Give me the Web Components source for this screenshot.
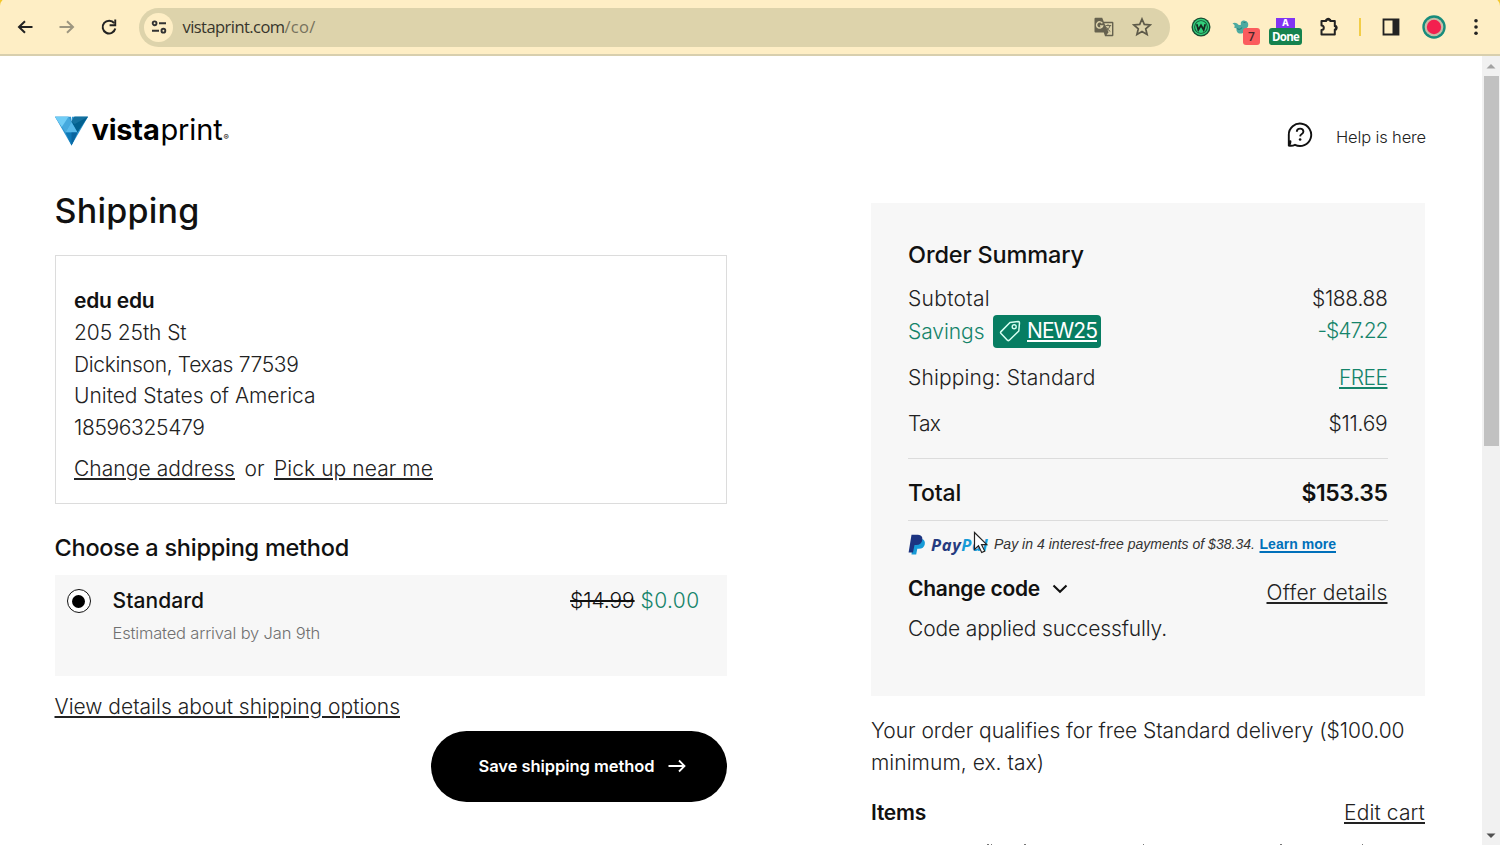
<!DOCTYPE html>
<html lang="en">
<head>
<meta charset="utf-8">
<title>Shipping</title>
<style>
  body {
    margin: 0;
    height: 845px;
    overflow: hidden;
    background: #fff;
    color: #222;
    font: 300 21px/32px Inter, "Liberation Sans", sans-serif;
  }
</style>
</head>
<body>

<checkout-page></checkout-page>

<script>
// Text that spreads its letters to take up the given width
class FitText extends HTMLElement {

  constructor() {
    super();

    const shadowRoot = this.attachShadow({mode: 'open'});

    shadowRoot.innerHTML = `
      <style>
        :host { display: inline-block; white-space: nowrap; }
        :host([u]) span {
          text-decoration: underline;
          text-decoration-thickness: var(--line, 1.5px);
          text-underline-offset: 2px;
        }
        span { display: inline-block; }
      </style>
      <span><slot></slot></span>
    `;
  }

  connectedCallback() {
    const span = this.shadowRoot.querySelector('span');
    const width = parseFloat(this.getAttribute('w'));
    const natural = span.getBoundingClientRect().width;

    span.style.letterSpacing = `${(width - natural) / this.textContent.length}px`;
    this.style.width = `${width}px`;
  }

}

const icons = {
  back: [18, 18, '<path d="M16.500 9H3M9 3.200 3 9l6 5.800" fill="none" stroke="#222" stroke-width="2"/>'],
  forward: [18, 18, '<path d="M1.500 9h13M9 3.200l6 5.800-6 5.800" fill="none" stroke="#9d9680" stroke-width="2"/>'],
  reload: [18, 18, '<path d="M14.2 5.2A6.4 6.4 0 1 0 15.3 10.6" fill="none" stroke="#222" stroke-width="2"/><path d="M16.2 1.6v6.6H9.6V6.3h4.7V1.6z" fill="#222"/>'],
  tune: [16, 16, '<g fill="none" stroke="#333" stroke-width="1.9"><circle cx="3.6" cy="4.3" r="1.9"/><path d="M8 4.3h7M1 11.7h7"/><circle cx="12.4" cy="11.7" r="1.9"/></g>'],
  translate: [20, 20, '<path d="M1.500.8h6.700l1.600 4h8.600q1 0 1 1v12.400q0 1-1 1H11l-1.200-3.700H1.500q-1 0-1-1V1.800q0-1 1-1z" fill="#66624f"/><path d="M10.300 6.200h7.700v11.600h-5.400l2-2.500z" fill="#ddd3ab"/><path d="M8.300 6.300A3.100 3.100 0 1 0 8.600 9H6" fill="none" stroke="#ddd3ab" stroke-width="1.500"/><path d="M11.500 8.600h5.700M14 7.300v1.300M16 8.800q-.8 3-3.600 5M12.500 10.200q1.200 2.600 3.800 4.300" fill="none" stroke="#66624f"/>'],
  star: [20, 20, '<path d="m10 2 2.300 5.400 5.900.5-4.500 3.900 1.400 5.700L10 14.500l-5.100 3 1.400-5.700-4.500-3.900 5.900-.5z" fill="none" stroke="#5e5a49" stroke-width="1.700"/>'],
  wave: [20, 20, '<circle cx="10" cy="10" r="9.500" fill="#174b31"/><circle cx="10" cy="10" r="7.500" fill="none" stroke="#32cf7c" stroke-width="1.300"/><circle cx="10" cy="10" r="5.900" fill="#32cf7c"/><path d="m5.800 7.300 1.500 5.700L10 8.300l2.700 4.700 1.500-5.700" fill="none" stroke="#15281f" stroke-width="1.800"/>'],
  bird: [18, 18, '<path d="M.5 4.200Q3 3 5.200 4.500 7 7 9 5.500 8 2.500 11 1.500q4-.5 5 2.500 1 4-2 5.500-1 4-4 5H7q-3-1.500-2.500-5L2 8.500q1-1 .5-2.500z" fill="#4daaa0"/><path d="M5 9.500q3 2 5-1M11.500 3.500h2" stroke="#2c837c" stroke-width="1.200" fill="none"/>'],
  puzzle: [22, 22, '<path d="M3.500 5h4.700V3.800h4V5h4.600v5.200h1.300v3.200h-1.300v5.100H3.500v-4.400q2.300-.1 2.300-2.300T3.500 9.500z" fill="none" stroke="#222" stroke-width="2" stroke-linejoin="round"/><path d="M8 4a2.200 2.200 0 0 1 4.400 0zM17.500 9.500a2.200 2.200 0 0 1 0 4.400z" fill="#222"/>'],
  panel: [18, 18, '<path d="M1.500 1.500h15v15h-15z" fill="none" stroke="#222" stroke-width="1.800"/><path d="M10.500 1h6.500v16h-6.500z" fill="#222"/>'],
  profile: [24, 24, '<circle cx="12" cy="12" r="11.700" fill="#178c7c"/><circle cx="12" cy="12" r="9.300" fill="#c6bda7"/><circle cx="12" cy="12" r="7.200" fill="#f3204f"/>'],
  dots: [6, 18, '<g fill="#222"><circle cx="3" cy="2.800" r="1.800"/><circle cx="3" cy="9" r="1.800"/><circle cx="3" cy="15.200" r="1.800"/></g>'],
  vista: [33, 30, '<path d="M0 .7h16L16.500 6 17 .7h16L16.500 29.500z" fill="#2f95cf"/><path d="M0 .7h13.500L16.500 6 10.500 16.500z" fill="#45a9de"/><path d="M0 .7h13.500L6.800 11z" fill="#70cdf6"/><path d="M19.500.7H33L22.500 16.500 16.500 6z" fill="#02608f"/><path d="M19.500.7H33L19.800 8 16.500 6z" fill="#14719f"/><path d="M16.500 6 22.500 16.500h-12z" fill="#58b9ea"/><path d="M10.500 16.500h12l-6 13z" fill="#0e79b6"/><path d="M16.500 16.500h6l-6 13z" fill="#0a659f"/>'],
  help: [26, 26, '<path d="M1.800 23.600V12.800A11.200 11.200 0 1 1 8 22.800q-2.800 1.500-6.200.8 1.900-1.500 1.600-4.400" fill="none" stroke="#111" stroke-width="1.900" stroke-linecap="round" stroke-linejoin="round"/><path d="M9.800 9.800q.1-3.200 3.300-3.200t3.300 2.900q0 1.500-1.600 2.500t-1.700 2.400" fill="none" stroke="#111" stroke-width="1.900"/><circle cx="13.100" cy="17.500" r="1.300" fill="#111"/>'],
  tag: [22, 22, '<path d="M11 2.500 19.300 1.500q1.200 0 1.200 1.200L19.800 11 10.300 20.200q-1 .8-1.900 0L2 13.600q-.9-1 0-2z" fill="none" stroke="#d6fff2" stroke-width="1.500" stroke-linejoin="round"/><circle cx="15.200" cy="6.800" r="2" fill="none" stroke="#d6fff2" stroke-width="1.400"/>'],
  chevron: [16, 10, '<path d="m1.500 1.500 6.500 6.300 6.500-6.300" fill="none" stroke="#111" stroke-width="2.100"/>'],
  arrow: [18, 14, '<path d="M.5 7h15.800M11 1.500 16.500 7 11 12.500" fill="none" stroke="#fff" stroke-width="1.800"/>'],
  paypal: [18, 21, '<path d="M5 5h8.500q4 .8 3.300 5.200-1 4.600-6 4.600H9.300L8.200 20.500H3.500z" fill="#179bd7"/><path d="M3.500.8H10q5 .5 4.300 5.100-.9 5.100-6.200 5.100H6.500L5 18.500H.6z" fill="#1c3481"/>'],
  cursor: [16, 24, '<path d="M1.500 1.500v17l4-3.700 3.200 6.700 3-1.400-3.200-6.500h5.300z" fill="#fff" stroke="#222" stroke-width="1.200"/>'],
  up: [10, 6, '<path d="M.5 5.500 5 1l4.500 4.500z" fill="#a3a3a3"/>'],
  down: [10, 6, '<path d="M.5.500 5 5 9.500.500z" fill="#505050"/>']
};

class UiIcon extends HTMLElement {

  constructor() {
    super();

    const [width, height, shapes] = icons[this.getAttribute('name')];

    this.attachShadow({mode: 'open'}).innerHTML = `
      <style>
        :host { display: inline-flex; flex: none; }
      </style>
      <svg width="${width}" height="${height}" viewBox="0 0 ${width} ${height}">${shapes}</svg>
    `;
  }

}

class BrowserBar extends HTMLElement {

  constructor() {
    super();

    this.attachShadow({mode: 'open'}).innerHTML = `
      <style>
        :host { display: block; height: 56px; background: #f3c72b; overflow: hidden; }
        .bar {
          display: flex; align-items: center; box-sizing: border-box; height: 58px; margin-top: -2px;
          padding: 2px 3px 0; background: #feeec5; border-bottom: 2px solid #d8cfae;
          border-radius: 8px 8px 0 0;
        }
        .cell { display: flex; justify-content: center; align-items: center; flex: none; }
        .url {
          display: flex; align-items: center; flex: none; box-sizing: border-box; width: 1031px; height: 39px;
          margin-left: 8px; padding: 0 18px 0 5px; border-radius: 20px; background: #ddd3ab;
          font: 400 16.500px/22px "Open Sans", sans-serif; color: #37352c;
        }
        .site { width: 29px; height: 29px; border-radius: 50%; background: #feeec5; margin-right: 9.500px; }
        .path { color: #77725d; }
        .url ui-icon + ui-icon { margin-left: 18px; }
        .grow { flex: 1; }
        .ext { position: relative; height: 39px; }
        .ext ui-icon { align-self: flex-start; margin: 11px 14px 0 0; }
        .badge {
          position: absolute; border-radius: 3px; text-align: center;
          font: 700 11px/16px "Open Sans", sans-serif;
        }
        .red { left: 11px; top: 20px; width: 17px; height: 17px; background: #fb5c5e; color: #47262b; font-size: 12px; font-weight: 600; line-height: 17px; }
        .purple { position: absolute; left: 12px; top: 10px; width: 19px; height: 10px; background: #8134f3; color: #fff; text-align: center; font: 800 9px/10px Inter, sans-serif; }
        .green { left: 5px; top: 20px; width: 33px; height: 17px; background: #15824e; color: #fff; font-size: 11.500px; line-height: 17px; }
        .rule { width: 2px; height: 18px; background: #f2cd47; }
      </style>
      <div class="bar">
        <div class="cell" style="width: 43px"><ui-icon name="back"></ui-icon></div>
        <div class="cell" style="width: 41px"><ui-icon name="forward"></ui-icon></div>
        <div class="cell" style="width: 44px"><ui-icon name="reload"></ui-icon></div>
        <div class="url">
          <div class="cell site"><ui-icon name="tune"></ui-icon></div>
          <fit-text w="102">vistaprint.com</fit-text><fit-text class="path" w="31">/co/</fit-text>
          <div class="grow"></div>
          <ui-icon name="translate"></ui-icon>
          <ui-icon name="star"></ui-icon>
        </div>
        <div class="cell" style="width: 62px"><ui-icon name="wave"></ui-icon></div>
        <div class="cell ext" style="width: 32px"><ui-icon name="bird"></ui-icon><div class="badge red">7</div></div>
        <div class="cell ext" style="width: 43px"><div class="purple">A</div><div class="badge green"><fit-text w="27">Done</fit-text></div></div>
        <div class="cell" style="width: 44px"><ui-icon name="puzzle"></ui-icon></div>
        <div class="cell" style="width: 18px"><div class="rule"></div></div>
        <div class="cell" style="width: 44px"><ui-icon name="panel"></ui-icon></div>
        <div class="cell" style="width: 41px"><ui-icon name="profile"></ui-icon></div>
        <div class="cell" style="width: 43px"><ui-icon name="dots"></ui-icon></div>
      </div>
    `;
  }

}

class ScrollBar extends HTMLElement {

  constructor() {
    super();

    this.attachShadow({mode: 'open'}).innerHTML = `
      <style>
        :host {
          display: flex; flex-direction: column; align-items: center; flex: none; box-sizing: border-box;
          width: 18px; padding: 7px 0 6px; background: #f1f1f1;
        }
        .thumb { width: 15px; height: 370px; margin: 7px 0 auto 1px; background: #c1c1c1; }
      </style>
      <ui-icon name="up"></ui-icon>
      <div class="thumb"></div>
      <ui-icon name="down"></ui-icon>
    `;
  }

}

class VistaLogo extends HTMLElement {

  constructor() {
    super();

    this.attachShadow({mode: 'open'}).innerHTML = `
      <style>
        :host { display: flex; align-items: flex-start; height: 32px; color: #000; font-size: 29px; line-height: 28px; }
        .bold { font-weight: 700; margin-left: 4px; }
        .thin { font-weight: 400; margin-left: 1px; }
        .mark { font-size: 8px; font-weight: 400; line-height: 10px; margin: 16px 0 0 1px; }
      </style>
      <ui-icon name="vista"></ui-icon>
      <fit-text class="bold" w="68">vista</fit-text>
      <fit-text class="thin" w="62">print</fit-text>
      <span class="mark">®</span>
    `;
  }

}

class AddressCard extends HTMLElement {

  constructor() {
    super();

    this.attachShadow({mode: 'open'}).innerHTML = `
      <style>
        :host { display: block; box-sizing: border-box; width: 672px; height: 249px; padding: 29px 19px 0 18.500px; border: 1px solid #dcdcdc; }
        .line { height: 31.800px; line-height: 32px; }
        .name { font-weight: 600; color: #111; }
        .links { display: flex; margin-top: 9.500px; gap: 9.500px; }
      </style>
      <div class="line name"><fit-text w="80.500">edu edu</fit-text></div>
      <div class="line"><fit-text w="112.500">205 25th St</fit-text></div>
      <div class="line"><fit-text w="224.500">Dickinson, Texas 77539</fit-text></div>
      <div class="line"><fit-text w="241.500">United States of America</fit-text></div>
      <div class="line"><fit-text w="130.500">18596325479</fit-text></div>
      <div class="line links"><fit-text u w="161">Change address</fit-text><fit-text w="20">or</fit-text><fit-text u w="159">Pick up near me</fit-text></div>
    `;
  }

}

class ShippingMethod extends HTMLElement {

  constructor() {
    super();

    this.attachShadow({mode: 'open'}).innerHTML = `
      <style>
        :host { display: flex; box-sizing: border-box; width: 672px; height: 101px; padding: 10px 27px 0 12px; background: #f7f7f7; }
        .radio {
          display: grid; place-items: center; box-sizing: border-box; width: 24px; height: 24px; margin: 4px 22px 0 0;
          border: 1.500px solid #111; border-radius: 50%; background: #fff;
        }
        .radio::after { content: ""; width: 13px; height: 13px; border-radius: 50%; background: #000; }
        .text { flex: 1; }
        .title { font-weight: 500; color: #111; }
        .note { font-size: 16.500px; line-height: 33px; color: #707070; font-weight: 350; }
        .old { color: #111; text-decoration: line-through; text-decoration-thickness: 1.500px; }
        .new { color: #15846a; }
      </style>
      <div class="radio"></div>
      <div class="text">
        <div class="title"><fit-text w="91.500">Standard</fit-text></div>
        <div class="note"><fit-text w="207.500">Estimated arrival by Jan 9th</fit-text></div>
      </div>
      <div><fit-text w="64.500"><s class="old">$14.99</s></fit-text> <fit-text class="new" w="59">$0.00</fit-text></div>
    `;
  }

}

class SaveButton extends HTMLElement {

  constructor() {
    super();

    this.attachShadow({mode: 'open'}).innerHTML = `
      <style>
        :host {
          display: flex; align-items: center; justify-content: center; gap: 13px; box-sizing: border-box;
          width: 296px; height: 70.500px; padding-left: 7px; border-radius: 36px; background: #000; color: #fff;
          font-weight: 600; font-size: 16.500px;
        }
      </style>
      <slot></slot>
      <ui-icon name="arrow"></ui-icon>
    `;
  }

}

class SummaryRow extends HTMLElement {

  constructor() {
    super();

    this.attachShadow({mode: 'open'}).innerHTML = `
      <style>
        :host { display: flex; justify-content: space-between; align-items: center; }
        .label { display: flex; align-items: center; }
      </style>
      <div class="label"><slot></slot></div>
      <slot name="amount"></slot>
    `;
  }

}

class OrderSummary extends HTMLElement {

  constructor() {
    super();

    this.attachShadow({mode: 'open'}).innerHTML = `
      <style>
        :host { display: block; box-sizing: border-box; width: 554px; height: 493px; padding: 36px 37.500px 0 37px; background: #f7f7f7; }
        h2 { margin: 0; font-size: 23.500px; font-weight: 500; line-height: 32px; color: #111; }
        .subtotal { height: 32px; margin-top: 12px; }
        .savings { height: 32px; color: #15846a; }
        .savings > fit-text:first-child { margin-top: 2px; }
        .coupon {
          display: flex; align-items: center; box-sizing: border-box; width: 108px; height: 33px; margin-left: 8.500px;
          padding-left: 6px; border-radius: 4px; background: #077d62; color: #fff; font-weight: 400;
        }
        .coupon ui-icon { margin-right: 6px; }
        .shipping { height: 32px; margin-top: 14.500px; }
        .free { color: #15846a; }
        .tax { height: 32px; margin-top: 14px; }
        .total { height: 63px; margin-top: 18.500px; padding-top: 6px; box-sizing: border-box; border: solid #dcdcdc; border-width: 1px 0; font-weight: 600; font-size: 23px; color: #111; }
        .paypal { position: relative; display: flex; align-items: center; height: 46px; color: #333; font: italic 400 14px/20px "Liberation Sans", sans-serif; }
        .brand { margin: 2px 6px 0 5px; color: #253b80; font: italic 700 16.500px/20px "Open Sans", sans-serif; }
        .brand b { color: #179bd7; font-weight: 700; }
        .learn { margin-left: 4.500px; color: #0070ba; font-style: normal; font-weight: 700; }
        .paypal .pointer { position: absolute; left: 65px; top: 10px; }
        .code { height: 32px; margin-top: 7px; }
        .change { font-weight: 600; color: #111; margin-top: -3px; }
        .offer { margin-top: 5px; }
        .chevron { margin: -3px 0 0 12px; }
        .applied { margin-top: 7px; }
      </style>
      <h2><fit-text w="176">Order Summary</fit-text></h2>
      <summary-row class="subtotal"><fit-text w="82">Subtotal</fit-text><fit-text slot="amount" w="75.500">$188.88</fit-text></summary-row>
      <summary-row class="savings">
        <fit-text w="76.500">Savings</fit-text>
        <div class="coupon"><ui-icon name="tag"></ui-icon><fit-text u w="70">NEW25</fit-text></div>
        <fit-text slot="amount" w="70">-$47.22</fit-text>
      </summary-row>
      <summary-row class="shipping"><fit-text w="187.500">Shipping: Standard</fit-text><fit-text class="free" slot="amount" u w="48.500">FREE</fit-text></summary-row>
      <summary-row class="tax"><fit-text w="32">Tax</fit-text><fit-text slot="amount" w="59">$11.69</fit-text></summary-row>
      <summary-row class="total"><fit-text style="font-weight: 500" w="53">Total</fit-text><fit-text slot="amount" w="86">$153.35</fit-text></summary-row>
      <div class="paypal">
        <ui-icon name="paypal"></ui-icon>
        <fit-text class="brand" w="57">Pay<b>Pal</b></fit-text>
        <fit-text w="261">Pay in 4 interest-free payments of $38.34.</fit-text>
        <fit-text class="learn" u w="76.500">Learn more</fit-text>
        <ui-icon class="pointer" name="cursor"></ui-icon>
      </div>
      <summary-row class="code">
        <fit-text class="change" w="132">Change code</fit-text><ui-icon class="chevron" name="chevron"></ui-icon>
        <fit-text class="offer" slot="amount" u w="121">Offer details</fit-text>
      </summary-row>
      <div class="applied"><fit-text w="259">Code applied successfully.</fit-text></div>
    `;
  }

}

class CheckoutPage extends HTMLElement {

  constructor() {
    super();

    this.attachShadow({mode: 'open'}).innerHTML = `
      <style>
        :host { display: flex; flex-direction: column; height: 845px; }
        .window { display: flex; flex: 1; min-height: 0; }
        main { flex: 1; box-sizing: border-box; padding: 60px 57px 0 54.500px; overflow: hidden; }
        header { display: flex; justify-content: space-between; height: 32px; }
        .help { display: flex; align-items: flex-start; gap: 23px; margin-right: -1px; padding-top: 6px; font-size: 16.500px; line-height: 30px; font-weight: 350; }
        .columns { display: flex; justify-content: space-between; align-items: flex-start; }
        .left { width: 672px; }
        h1 { margin: 43px 0 0; font-size: 34px; font-weight: 500; line-height: 40px; color: #111; }
        address-card { margin-top: 24px; }
        h2 { margin: 28px 0 0; font-size: 23.500px; font-weight: 500; line-height: 32px; color: #111; }
        shipping-method { margin-top: 11px; }
        .details { margin-top: 15px; }
        save-button { margin: 8px 0 0 auto; }
        .right { width: 554px; margin-top: 55px; }
        .note { margin-top: 19px; }
        .items { margin-top: 18px; }
        .items b { font-weight: 600; color: #111; }
        /* only the tops of the first item's tall letters reach into the window */
        .peek { display: flex; height: 2px; margin-top: 15px; padding-left: 116px; }
        .peek i { width: 1.500px; height: 2px; background: #777; }
      </style>
      <browser-bar></browser-bar>
      <div class="window">
        <main>
          <header>
            <vista-logo></vista-logo>
            <div class="help"><ui-icon name="help"></ui-icon><fit-text w="90">Help is here</fit-text></div>
          </header>
          <div class="columns">
            <div class="left">
              <h1><fit-text w="145">Shipping</fit-text></h1>
              <address-card></address-card>
              <h2><fit-text w="294.500">Choose a shipping method</fit-text></h2>
              <shipping-method></shipping-method>
              <div class="details"><fit-text u w="345.500">View details about shipping options</fit-text></div>
              <save-button><fit-text w="176">Save shipping method</fit-text></save-button>
            </div>
            <div class="right">
              <order-summary></order-summary>
              <div class="note">
                <fit-text w="533.500">Your order qualifies for free Standard delivery ($100.00</fit-text><br>
                <fit-text w="173">minimum, ex. tax)</fit-text>
              </div>
              <summary-row class="items"><b><fit-text w="55">Items</fit-text></b><fit-text slot="amount" u w="81">Edit cart</fit-text></summary-row>
              <div class="peek">
                <i></i><i style="margin-left: 2px"></i><i style="margin-left: 32px"></i><i style="margin-left: 117px"></i>
                <i style="margin-left: 136px"></i><i style="margin-left: 80px"></i>
              </div>
            </div>
          </div>
        </main>
        <scroll-bar></scroll-bar>
      </div>
    `;
  }

}

customElements.define('fit-text', FitText);
customElements.define('ui-icon', UiIcon);
customElements.define('browser-bar', BrowserBar);
customElements.define('scroll-bar', ScrollBar);
customElements.define('vista-logo', VistaLogo);
customElements.define('address-card', AddressCard);
customElements.define('shipping-method', ShippingMethod);
customElements.define('save-button', SaveButton);
customElements.define('summary-row', SummaryRow);
customElements.define('order-summary', OrderSummary);
customElements.define('checkout-page', CheckoutPage);
</script>
</body>
</html>
